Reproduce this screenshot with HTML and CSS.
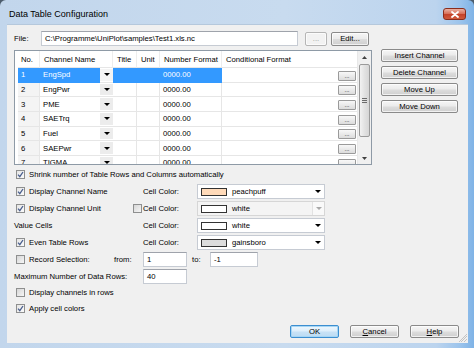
FILE: index.html
```html
<!DOCTYPE html>
<html>
<head>
<meta charset="utf-8">
<title>Data Table Configuration</title>
<link rel="stylesheet" href="styles.css">
</head>
<body>
<div class="window">
  <div class="titlebar">
    <span class="title">Data Table Configuration</span>
    <div class="close"><svg width="10" height="7" viewBox="0 0 10 7"><path d="M2 1 L8 6 M8 1 L2 6" stroke="#fff" stroke-width="1.8" stroke-linecap="round"/></svg></div>
  </div>
  <div class="client">
    <div class="file-row">
      <span class="file-label">File:</span>
      <div class="textbox file-path">C:\Programme\UniPlot\samples\Test1.xls.nc</div>
      <div class="btn btn-dots disabled">...</div>
      <div class="btn btn-edit">Edit...</div>
    </div>

    <div class="main">
      <div class="table">
        <div class="table-body">
          <div class="row head">
            <div class="c no">No.</div>
            <div class="c name-h">Channel Name</div>
            <div class="c title-c">Title</div>
            <div class="c unit">Unit</div>
            <div class="c fmt">Number Format</div>
            <div class="c cf">Conditional Format</div>
          </div>
          <div class="row sel">
            <div class="c no">1</div><div class="c name">EngSpd</div><div class="c dd"><span class="ddbtn"><i class="tri"></i></span></div><div class="c title-c"></div><div class="c unit"></div><div class="c fmt">0000.00</div><div class="c cf"><span class="mini">...</span></div>
          </div>
          <div class="row">
            <div class="c no">2</div><div class="c name">EngPwr</div><div class="c dd"><span class="ddbtn"><i class="tri"></i></span></div><div class="c title-c"></div><div class="c unit"></div><div class="c fmt">0000.00</div><div class="c cf"><span class="mini">...</span></div>
          </div>
          <div class="row">
            <div class="c no">3</div><div class="c name">PME</div><div class="c dd"><span class="ddbtn"><i class="tri"></i></span></div><div class="c title-c"></div><div class="c unit"></div><div class="c fmt">0000.00</div><div class="c cf"><span class="mini">...</span></div>
          </div>
          <div class="row">
            <div class="c no">4</div><div class="c name">SAETrq</div><div class="c dd"><span class="ddbtn"><i class="tri"></i></span></div><div class="c title-c"></div><div class="c unit"></div><div class="c fmt">0000.00</div><div class="c cf"><span class="mini">...</span></div>
          </div>
          <div class="row">
            <div class="c no">5</div><div class="c name">Fuel</div><div class="c dd"><span class="ddbtn"><i class="tri"></i></span></div><div class="c title-c"></div><div class="c unit"></div><div class="c fmt">0000.00</div><div class="c cf"><span class="mini">...</span></div>
          </div>
          <div class="row">
            <div class="c no">6</div><div class="c name">SAEPwr</div><div class="c dd"><span class="ddbtn"><i class="tri"></i></span></div><div class="c title-c"></div><div class="c unit"></div><div class="c fmt">0000.00</div><div class="c cf"><span class="mini">...</span></div>
          </div>
          <div class="row">
            <div class="c no">7</div><div class="c name">TIGMA</div><div class="c dd"><span class="ddbtn"><i class="tri"></i></span></div><div class="c title-c"></div><div class="c unit"></div><div class="c fmt">0000.00</div><div class="c cf"><span class="mini">...</span></div>
          </div>
        </div>
        <div class="vscroll">
          <div class="sb-arrow"><svg width="5" height="3" viewBox="0 0 5 3"><path d="M0 3 L2.5 0 L5 3 Z" fill="#404040"/></svg></div>
          <div class="sb-track">
            <div class="sb-thumb"><span class="grip-lines"></span></div>
          </div>
          <div class="sb-arrow"><svg width="5" height="3" viewBox="0 0 5 3"><path d="M0 0 L2.5 3 L5 0 Z" fill="#404040"/></svg></div>
        </div>
      </div>
      <div class="side">
        <div class="btn side-btn">Insert Channel</div>
        <div class="btn side-btn">Delete Channel</div>
        <div class="btn side-btn">Move Up</div>
        <div class="btn side-btn">Move Down</div>
      </div>
    </div>

    <div class="options">
      <label class="chk span-all"><span class="cb on"><svg width="7" height="7" viewBox="0 0 7 7"><path d="M1 3.6 L2.8 5.6 L6 1" fill="none" stroke="#4a5f8e" stroke-width="1.3"/></svg></span>Shrink number of Table Rows and Columns automatically</label>

      <label class="chk c1"><span class="cb on"><svg width="7" height="7" viewBox="0 0 7 7"><path d="M1 3.6 L2.8 5.6 L6 1" fill="none" stroke="#4a5f8e" stroke-width="1.3"/></svg></span>Display Channel Name</label>
      <span class="lbl c4">Cell Color:</span>
      <div class="combo c5"><span class="swatch" style="background:#ffdab9"></span><span class="combo-text">peachpuff</span><span class="combo-arrow"><i class="tri"></i></span></div>

      <label class="chk c1"><span class="cb on"><svg width="7" height="7" viewBox="0 0 7 7"><path d="M1 3.6 L2.8 5.6 L6 1" fill="none" stroke="#4a5f8e" stroke-width="1.3"/></svg></span>Display Channel Unit</label>
      <label class="chk c34"><span class="cb"></span>Cell Color:</label>
      <div class="combo disabled c5"><span class="swatch" style="background:#ffffff"></span><span class="combo-text">white</span><span class="combo-arrow"><i class="tri"></i></span></div>

      <span class="lbl c1">Value Cells</span>
      <span class="lbl c4">Cell Color:</span>
      <div class="combo c5"><span class="swatch" style="background:#ffffff"></span><span class="combo-text">white</span><span class="combo-arrow"><i class="tri"></i></span></div>

      <label class="chk c1"><span class="cb on"><svg width="7" height="7" viewBox="0 0 7 7"><path d="M1 3.6 L2.8 5.6 L6 1" fill="none" stroke="#4a5f8e" stroke-width="1.3"/></svg></span>Even Table Rows</label>
      <span class="lbl c4">Cell Color:</span>
      <div class="combo c5"><span class="swatch" style="background:#dcdcdc"></span><span class="combo-text">gainsboro</span><span class="combo-arrow"><i class="tri"></i></span></div>

      <label class="chk c1"><span class="cb"></span>Record Selection:</label>
      <span class="lbl c2">from:</span>
      <div class="range c45">
        <div class="textbox num">1</div>
        <span class="to">to:</span>
        <div class="textbox num2">-1</div>
      </div>

      <span class="lbl c123">Maximum Number of Data Rows:</span>
      <div class="c4"><div class="textbox num">40</div></div>

      <label class="chk span-all"><span class="cb"></span>Display channels in rows</label>
      <label class="chk span-all"><span class="cb on"><svg width="7" height="7" viewBox="0 0 7 7"><path d="M1 3.6 L2.8 5.6 L6 1" fill="none" stroke="#4a5f8e" stroke-width="1.3"/></svg></span>Apply cell colors</label>
    </div>

    <div class="footer">
      <div class="btn foot-btn default">OK</div>
      <div class="btn foot-btn"><u>C</u>ancel</div>
      <div class="btn foot-btn"><u>H</u>elp</div>
    </div>

    <svg class="grip" width="9" height="9" viewBox="0 0 9 9"><path d="M8 2 L2 8 M8 5 L5 8 M8 0 L0 8" stroke="#b8b8b8" stroke-width="0.8"/></svg>
  </div>
</div>
</body>
</html>
```

FILE: styles.css
```css
* { box-sizing: border-box; }
html, body { margin: 0; padding: 0; }
body {
  width: 474px;
  height: 348px;
  overflow: hidden;
  background: #4d5d6d;
  font-family: "Liberation Sans", Arial, sans-serif;
  font-size: 7.7px;
  color: #000;
}

.window {
  width: 474px;
  height: 348px;
  display: flex;
  flex-direction: column;
  border-radius: 6px 6px 0 0;
  padding: 0 6px 5px 7px;
  background: linear-gradient(90deg, #c2d6ec 0%, #c8dbef 60%, #bcd4ee 92%, #9cc4ec 97%, #7fb3e6 100%);
}

.titlebar {
  height: 24px;
  display: flex;
  align-items: flex-start;
  justify-content: space-between;
  flex: none;
}
.title {
  font-size: 9px;
  margin-top: 9px;
  margin-left: 2px;
  color: #000;
}
.close {
  margin-top: 8px;
  margin-right: 2px;
  width: 23px;
  height: 12px;
  border: 1px solid #8a2d1c;
  border-radius: 3px;
  background: linear-gradient(#eab2a4 0%, #d9735c 45%, #c4432a 55%, #d05a3c 100%);
  display: flex;
  align-items: center;
  justify-content: center;
}

.client {
  flex: 1;
  position: relative;
  background: #f0f0f0;
  border-top: 1px solid #b5c8dc;
  padding: 5px 9px 0 7px;
  display: flex;
  flex-direction: column;
}

/* file row */
.file-row {
  display: flex;
  align-items: center;
  height: 15px;
  margin-top: 1px;
}
.file-label { width: 27px; }
.textbox {
  background: #fff;
  border: 1px solid #c6cbd3;
  border-top-color: #9fa3ab;
  height: 15px;
  display: flex;
  align-items: center;
  padding-left: 3px;
}
.file-path { width: 257px; }

.btn {
  display: flex;
  align-items: center;
  justify-content: center;
  border: 1px solid #8a8a8a;
  border-radius: 2px;
  background: linear-gradient(#f6f6f6 0%, #ebebeb 48%, #dddddd 52%, #cfcfcf 100%);
  box-shadow: inset 0 0 0 1px rgba(255,255,255,0.7);
  color: #000;
}
.btn-dots { width: 22px; height: 14px; margin-left: 7px; }
.btn.disabled { color: #9a9a9a; border-color: #b5b5b5; background: #f2f2f2; }
.btn-edit { width: 38px; height: 14px; margin-left: 4px; }

/* main */
.main {
  display: flex;
  align-items: flex-start;
  margin-top: 4px;
}
.table {
  width: 358px;
  height: 115px;
  border: 1px solid #8e9aa6;
  background: #fff;
  display: flex;
}
.table-body {
  flex: 1;
  padding-left: 3px;
  overflow: hidden;
}
.row {
  display: grid;
  grid-template-columns: 22px 60px 13px 24px 23px 62px 135px;
  height: 14.7px;
}
.row.head {
  grid-template-columns: 22px 73px 24px 23px 62px 135px;
  height: 17px;
}
.c {
  border-right: 1px solid #e6e6e6;
  border-bottom: 1px solid #e6e6e6;
  display: flex;
  align-items: center;
  padding-left: 3px;
  white-space: nowrap;
  overflow: hidden;
}
.head .c { border-right-color: #ededed; padding-left: 4px; }
.head .no { padding-left: 5px; }
.row .no { padding-left: 3px; }
.row:not(.head) .no { background: #f4f4f4; }
.c.dd { padding: 1px 0; border-right: none; }
.c.name { border-right: none; }
.ddbtn {
  width: 100%;
  height: 100%;
  background: #ececec;
  display: flex;
  align-items: center;
  justify-content: center;
}
.row.sel .ddbtn { background: #f4f4f4; }
.tri {
  width: 0;
  height: 0;
  border-left: 3px solid transparent;
  border-right: 3px solid transparent;
  border-top: 3px solid #000;
}
.c.cf {
  justify-content: flex-end;
  align-items: flex-end;
  padding: 0 1px 1px 0;
  border-right: none;
}
.head .c.cf { justify-content: flex-start; align-items: center; padding: 0 0 0 4px; }
.mini {
  width: 18px;
  height: 10px;
  border: 1px solid #9a9a9a;
  border-radius: 1px;
  background: linear-gradient(#f8f8f8, #dcdcdc);
  font-size: 6px;
  display: flex;
  align-items: flex-end;
  justify-content: center;
  line-height: 7px;
}
.row.sel .c.no, .row.sel .c.name, .row.sel .c.title-c, .row.sel .c.unit, .row.sel .c.fmt {
  background: #3399ff;
  color: #fff;
  border-color: #3399ff;
}

.vscroll {
  width: 14px;
  display: flex;
  flex-direction: column;
  background: #f0f0f0;
  border-left: 1px solid #e8e8e8;
}
.sb-arrow {
  height: 12px;
  display: flex;
  align-items: center;
  justify-content: center;
  flex: none;
}
.sb-track { flex: 1; padding: 1px 1px 0 1px; }
.sb-thumb {
  height: 73px;
  border: 1px solid #9a9a9a;
  border-radius: 2px;
  background: linear-gradient(90deg, #f2f2f2, #e2e2e2 50%, #d6d6d6);
  display: flex;
  align-items: center;
  justify-content: center;
}
.grip-lines {
  width: 5px;
  height: 5px;
  border-top: 1px solid #6b6b6b;
  border-bottom: 1px solid #6b6b6b;
  position: relative;
}
.grip-lines::after {
  content: "";
  display: block;
  border-top: 1px solid #6b6b6b;
  margin-top: 1px;
}

.side {
  display: flex;
  flex-direction: column;
  gap: 4px;
  margin-left: 9px;
  margin-top: -1px;
}
.side-btn { width: 77px; height: 13px; }

/* options */
.options {
  display: grid;
  grid-template-columns: 99px 19px 10px 54px 128px;
  grid-template-rows: 17px 17px 17px 17px 17px 17px 16px 16px 16px;
  align-items: center;
  margin-top: 1px;
  padding-left: 1px;
}
.span-all { grid-column: 1 / -1; }
.c1 { grid-column: 1; }
.c2 { grid-column: 2; }
.c4 { grid-column: 4; }
.c5 { grid-column: 5; }
.c34 { grid-column: 3 / 5; }
.c45 { grid-column: 4 / 6; }
.c123 { grid-column: 1 / 4; }
.lbl { white-space: nowrap; }
.options > .lbl.c1, .options > .lbl.c123 { margin-left: -1px; }
.chk {
  display: flex;
  align-items: center;
  white-space: nowrap;
}
.chk.c1, .chk.span-all { padding-left: 1px; }
.cb {
  width: 9px;
  height: 9px;
  flex: none;
  margin-right: 4px;
  border: 1px solid #8e8f8f;
  background: linear-gradient(135deg, #d6d6d6, #f6f6f6);
  display: flex;
  align-items: center;
  justify-content: center;
}
.cb.on { background: linear-gradient(135deg, #e4e4e4, #fbfbfb); }
.c34 .cb { margin-right: 1px; }

.combo {
  width: 128px;
  height: 15px;
  background: #fff;
  border: 1px solid #c6cbd3;
  display: flex;
  align-items: center;
}
.swatch {
  width: 26px;
  height: 8px;
  margin-left: 3px;
  border: 1px solid #333;
  flex: none;
}
.combo-text { margin-left: 5px; }
.combo-arrow {
  margin-left: auto;
  width: 12px;
  height: 100%;
  display: flex;
  align-items: center;
  justify-content: center;
}
.combo.disabled { background: #f4f4f4; border-color: #d6d6d6; }
.combo.disabled .combo-arrow { background: #f9f9f9; border-left: 1px solid #e2e2e2; }
.combo.disabled .tri { border-top-color: #a8a8a8; }

.range { display: flex; align-items: center; }
.num { width: 44px; }
.to { width: 18px; margin-left: 5px; }
.num2 { width: 48px; }

/* footer */
.footer {
  display: flex;
  justify-content: flex-end;
  gap: 11px;
  margin-top: 9px;
}
.foot-btn { width: 49px; height: 13px; }
.foot-btn u { text-decoration: underline; }
.btn.default {
  border-color: #3c8ed0;
  box-shadow: inset 0 0 0 1px #a6d6f5;
  background: linear-gradient(#eef7fd 0%, #ddeefb 48%, #c8e2f6 52%, #bcdbf3 100%);
}

.grip {
  position: absolute;
  right: 0;
  bottom: 0;
}
```
